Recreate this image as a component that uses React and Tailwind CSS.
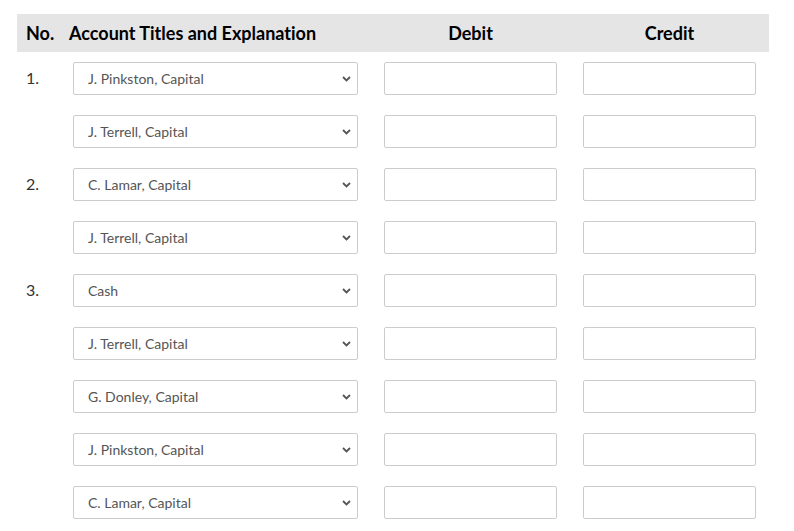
import React from "react";

const rows = [
  { no: "1.", acct: "J. Pinkston, Capital" },
  { no: "", acct: "J. Terrell, Capital" },
  { no: "2.", acct: "C. Lamar, Capital" },
  { no: "", acct: "J. Terrell, Capital" },
  { no: "3.", acct: "Cash" },
  { no: "", acct: "J. Terrell, Capital" },
  { no: "", acct: "G. Donley, Capital" },
  { no: "", acct: "J. Pinkston, Capital" },
  { no: "", acct: "C. Lamar, Capital" },
];

function Chevron() {
  return (
    <svg width="9" height="6" viewBox="0 0 9 6" className="absolute right-[6px] top-[13px]">
      <path d="M1 1 L4.5 4.5 L8 1" fill="none" stroke="#555" strokeWidth="1.8" />
    </svg>
  );
}

export default function App() {
  return (
    <div className="w-[794px] h-[531px] bg-white pt-[14px] pl-[17px] [font-variant-ligatures:none]" style={{ fontFamily: "Lato, 'Noto Sans', sans-serif" }}>
      <div className="w-[752px]">
        <div className="flex h-[38px] items-center bg-[#e5e5e5] text-[18px] font-bold text-black">
          <div className="w-[52px] pl-[9px]">No.</div>
          <div className="w-[315px]">Account Titles and Explanation</div>
          <div className="w-[173px] text-center">Debit</div>
          <div className="w-[26px]"></div>
          <div className="w-[173px] text-center">Credit</div>
        </div>
        <div className="flex flex-col gap-[21px] pt-[10px]">
          {rows.map((r, i) => (
            <div key={i} className="flex h-[32px] items-start">
              <div className="w-[56px] pl-[9px] pt-[4px] text-[16px] text-[#333]">{r.no}</div>
              <div className="relative w-[285px] h-[33px] rounded-[2px] border border-[#ccc] bg-white">
                <div className="pl-[14px] pt-[5px] text-[14px] text-[#555]">{r.acct}</div>
                <Chevron />
              </div>
              <div className="w-[26px]"></div>
              <div className="w-[173px] h-[33px] rounded-[2px] border border-[#ccc] bg-white"></div>
              <div className="w-[26px]"></div>
              <div className="w-[173px] h-[33px] rounded-[2px] border border-[#ccc] bg-white"></div>
            </div>
          ))}
        </div>
      </div>
    </div>
  );
}
